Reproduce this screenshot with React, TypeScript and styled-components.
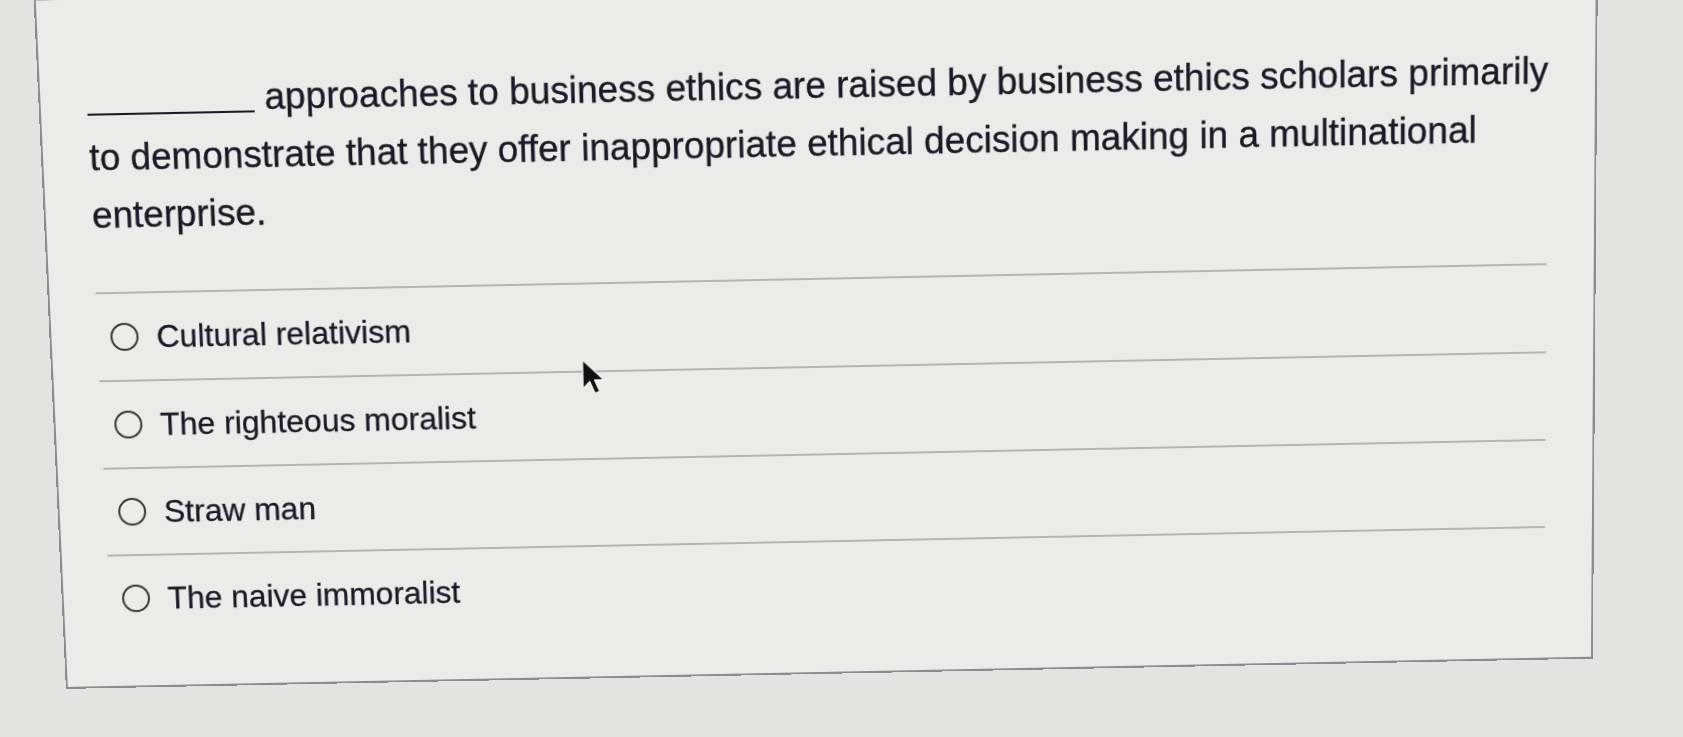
import styled, { createGlobalStyle } from 'styled-components'

const options = [
  'Cultural relativism',
  'The righteous moralist',
  'Straw man',
  'The naive immoralist',
]

const App = () => {
  return (
    <Page>
      <GlobalStyle />
      <Card>
        <Question>
          <Blank /> approaches to business ethics are raised by business ethics scholars primarily
          <br />
          to demonstrate that they offer inappropriate ethical decision making in a multinational
          <br />
          enterprise.
        </Question>
        <OptionList>
          {options.map((label) => (
            <OptionRow key={label}>
              <Radio />
              <OptionLabel>{label}</OptionLabel>
            </OptionRow>
          ))}
        </OptionList>
        <Pointer viewBox="0 0 20 32" aria-hidden="true">
          <path
            d="M1.5 1.5 L1.5 25 L7 19.5 L11 29 L15 27.3 L11 18.2 L18.5 18.2 Z"
            fill="#111"
            stroke="#f4f4f4"
            strokeWidth="1.2"
            strokeLinejoin="round"
          />
        </Pointer>
      </Card>
    </Page>
  )
}

export default App

const GlobalStyle = createGlobalStyle`
  html, body {
    margin: 0;
    padding: 0;
    background: #e3e3e1;
    overflow: hidden;
  }

  body {
    font-family: "Liberation Sans", Arial, sans-serif;
  }
`

const Page = styled.main`
  width: 1683px;
  height: 737px;
  overflow: hidden;
  background: #e3e3e1;
`

const Card = styled.section`
  position: relative;
  box-sizing: border-box;
  width: 1545px;
  height: 691px;
  margin: -13px 0 0 50px;
  padding: 70px 47px 0 46px;
  border: 2px solid #8b8b93;
  background: #ebebe9;
  transform: perspective(1000px) rotateX(-2deg) rotate(-1.15deg);
  transform-origin: 765px 358px;
`

const Question = styled.p`
  margin: 0;
  font-size: 36.7px;
  line-height: 57px;
  color: #1a1a26;
  -webkit-text-stroke: 0.35px #1a1a26;
  white-space: nowrap;
`

const Blank = styled.span`
  display: inline-block;
  width: 166px;
  height: 0;
  border-bottom: 2px solid #1a1a26;
  vertical-align: -3px;
`

const OptionList = styled.div`
  margin-top: 48px;
  display: flex;
  flex-direction: column;
`

const OptionRow = styled.label`
  box-sizing: border-box;
  height: 88px;
  display: flex;
  align-items: center;
  gap: 18px;
  padding-left: 13px;
  border-top: 2px solid #b4b4b4;
  cursor: pointer;
`

const Radio = styled.span`
  box-sizing: border-box;
  flex-shrink: 0;
  width: 28px;
  height: 28px;
  border: 2px solid #383838;
  border-radius: 50%;
`

const OptionLabel = styled.span`
  font-size: 32px;
  color: #1a1a26;
  -webkit-text-stroke: 0.3px #1a1a26;
`

const Pointer = styled.svg`
  position: absolute;
  left: 528px;
  top: 364px;
  width: 25px;
  height: 40px;
`
